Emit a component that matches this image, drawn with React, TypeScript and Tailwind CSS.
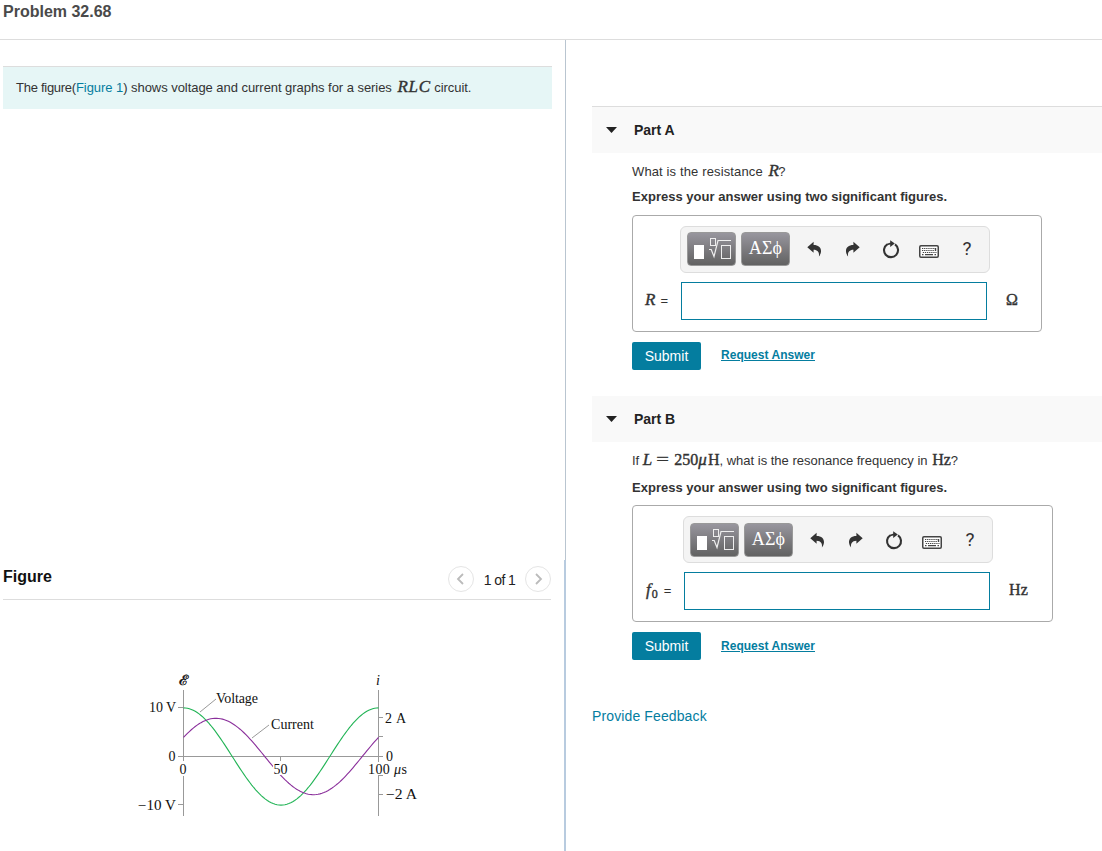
import React from 'react';

const CHART = { left: 183.5, right: 378.5, zero: 756.5 };

/**
 * Samples a cosine over one period and returns the SVG path for it
 */
function wavePath(amplitude: number, phase: number) {
  const points: string[] = [];
  for (let i = 0; i <= 100; i += 1) {
    const x = CHART.left + ((CHART.right - CHART.left) * i) / 100;
    const y = CHART.zero - amplitude * Math.cos((2 * Math.PI * i) / 100 - phase);
    points.push(`${x.toFixed(2)} ${y.toFixed(2)}`);
  }
  return `M${points.join('L')}`;
}

// Thin stroke gives the serif glyphs the weight of typeset math
function MathText({ children, className = '' }: { children: React.ReactNode; className?: string }) {
  return (
    <span
      className={`font-['Liberation_Serif',serif] leading-none [-webkit-text-stroke:0.4px_#333] ${className}`}
    >
      {children}
    </span>
  );
}

function UndoIcon({ flip = false }: { flip?: boolean }) {
  return (
    <svg width="15" height="16" viewBox="0 0 15 16" className={flip ? '-scale-x-100' : ''}>
      <path
        d="M0.3 6.2 6.6 0.8V4C11.5 4 14.3 6.7 14 10.6 13.8 12.9 12.8 14.6 11.9 15.4 12.5 11.6 11 8.8 6.6 8.7V11.8Z"
        fill="#333"
      />
    </svg>
  );
}

function ResetIcon() {
  return (
    <svg width="18" height="19" viewBox="0 0 18 19">
      <path d="M5.2 4.3A7 7 0 1 0 13 4.4" fill="none" stroke="#333" strokeWidth="2.1" />
      <path d="M8.2 0.2 12.8 3.6 8.2 7Z" fill="#333" />
      <path d="M5 4.5 9 3.4" stroke="#333" strokeWidth="1.8" />
    </svg>
  );
}

function KeyboardIcon() {
  return (
    <svg width="20" height="13" viewBox="0 0 20 13">
      <rect x="0.75" y="0.75" width="18.5" height="11.5" rx="1.2" fill="#fff" stroke="#444" strokeWidth="1.5" />
      <path d="M3 3.5H17.5M3 5.5H15" stroke="#444" strokeWidth="1.2" strokeDasharray="1.3 0.8" />
      <path d="M3.8 7.5H17.5" stroke="#444" strokeWidth="1.2" strokeDasharray="1.3 0.8" />
      <path d="M16.5 3V6M3 9.6H4.5M6 9.6H14M15.5 9.6H17" stroke="#444" strokeWidth="1.4" />
    </svg>
  );
}

function TemplatesIcon() {
  return (
    <svg width="38" height="24" viewBox="0 0 38 24">
      <rect x="0" y="8" width="10" height="14" fill="#fff" />
      <rect x="16.5" y="1.5" width="5" height="7" fill="none" stroke="#eee" />
      <path d="M15 12.5H17.2L20 19.5 24 3.5H37" fill="none" stroke="#eee" strokeWidth="1.2" />
      <rect x="27.5" y="8.5" width="9" height="13" fill="none" stroke="#eee" />
    </svg>
  );
}

function Toolbar({ className = '' }: { className?: string }) {
  return (
    <div
      className={`flex h-[47px] w-[310px] items-start rounded-md border border-[#ddd] bg-[#f4f4f4] pl-1.5 ${className}`}
    >
      <div className="mr-[5px] flex h-[34px] w-[49px] items-center justify-center rounded border border-[#999] bg-linear-to-b from-[#98969e] to-[#626262] pl-0.5">
        <TemplatesIcon />
      </div>
      <div className="mr-[5px] flex h-[34px] w-[49px] items-center justify-center rounded border border-[#999] bg-linear-to-b from-[#98969e] to-[#626262] pb-px font-['Liberation_Serif',serif] text-[18px] tracking-[0.2px] text-white">
        ΑΣϕ
      </div>
      <div className="flex h-[34px] w-[38px] items-center justify-center"><UndoIcon /></div>
      <div className="flex h-[34px] w-[38px] items-center justify-center"><UndoIcon flip /></div>
      <div className="flex h-[34px] w-[38px] items-center justify-center pl-0.5"><ResetIcon /></div>
      <div className="flex h-[34px] w-[38px] items-center justify-center pt-1 pl-0.5"><KeyboardIcon /></div>
      <div className="flex h-[34px] w-[38px] items-center justify-center pl-0.5 font-['Roboto',sans-serif] text-[19px] text-[#333]">
        ?
      </div>
    </div>
  );
}

function PartHeader({ title, className }: { title: string; className: string }) {
  return (
    <div className={`flex items-center bg-[#f9f9f9] ${className}`}>
      <svg width="11" height="6" viewBox="0 0 11 6" className="ml-3.5">
        <path d="M0 0H11L5.5 6Z" fill="#222" />
      </svg>
      <h2 className="ml-[17px] text-[14px] font-bold text-[#222]">{title}</h2>
    </div>
  );
}

function Actions({ linkClass = '' }: { linkClass?: string }) {
  return (
    <div className="mt-2.5 flex h-7 items-center">
      <button className="h-7 w-[69px] rounded-[2px] bg-[#047d9f] text-[14px] text-white">
        Submit
      </button>
      <a className={`ml-5 text-[12px] leading-4 font-bold tracking-[0.03px] text-[#047d9f] underline ${linkClass}`}>
        Request Answer
      </a>
    </div>
  );
}

function FigureChart() {
  return (
    <svg
      width="300"
      height="150"
      viewBox="130 670 300 150"
      className="mt-[70px] ml-[127px] font-['Liberation_Serif',serif] text-[14px]"
    >
      <g fill="none" stroke="#999" strokeWidth="1">
        <path d="M183.5 690V761M183.5 776V816M378.5 690V762M378.5 775V816" />
        <path d="M178 756.5H383M178 707.5H183M178 804.5H183M280.5 756V761" />
        <path d="M379 717.5H383M379 736.5H383M379 775.5H383M379 794.5H383" />
        <path d="M200 712 216 699M252 738 269 725" />
      </g>
      <g fill="none" strokeWidth="1.1">
        <path d={wavePath(48.6, 0)} stroke="#22b456" />
        <path d={wavePath(38.2, Math.PI / 3)} stroke="#8a2f9b" />
      </g>
      <rect x="273" y="764" width="16" height="11" fill="#fff" />
      <g fill="#111">
        <text x="179" y="685" textLength="9" lengthAdjust="spacingAndGlyphs" stroke="#111" strokeWidth="0.4" className="text-[14px]">ℰ</text>
        <text x="376" y="685" className="italic">i</text>
        <text x="149" y="712" textLength="27">10 V</text>
        <text x="168.5" y="761">0</text>
        <text x="179.5" y="774">0</text>
        <text x="138" y="810" textLength="38" lengthAdjust="spacingAndGlyphs">−10 V</text>
        <text x="216" y="703" textLength="42">Voltage</text>
        <text x="271" y="728.5" textLength="43">Current</text>
        <text x="273.5" y="774">50</text>
        <text x="385" y="723" textLength="21">2 A</text>
        <text x="386" y="761">0</text>
        <text x="368" y="774" textLength="39">
          100 <tspan className="italic">μ</tspan>s
        </text>
        <text x="386" y="799" textLength="31" lengthAdjust="spacingAndGlyphs">−2 A</text>
      </g>
    </svg>
  );
}

export default function App() {
  return (
    <div className="flex h-[851px] w-[1102px] flex-col overflow-hidden bg-white font-['Liberation_Sans',sans-serif] text-[13px] text-[#333]">
      <header className="h-10 shrink-0 border-b border-[#ddd] pt-px pl-[3px]">
        <h1 className="text-[16px] leading-[22px] font-bold text-[#4a4a4a]">Problem 32.68</h1>
      </header>

      <div className="flex min-h-0 flex-1">
        <section className="flex w-[564px] shrink-0 flex-col pl-[3px]">
          <div className="mt-[26px] h-[43px] w-[549px] border-t border-[#ddd] bg-[#e6f6f6] pl-[13px] leading-[42px] tracking-[-0.05px] whitespace-nowrap">
            <span className="tracking-[-0.27px]">The figure(</span>
            <a className="text-[#047d9f]">Figure 1</a>) shows voltage and current graphs for a series{' '}
            <MathText className="ml-0.5 text-[17px] tracking-[0.7px] italic">RLC</MathText> circuit.
          </div>

          <div className="mt-[451px] flex h-10 w-[548px] items-start border-b border-[#ddd]">
            <h2 className="mt-1.5 text-[16px] leading-[22px] font-bold text-[#111]">Figure</h2>
            <div className="mt-1.5 ml-auto flex items-center text-[14px] leading-[26px]">
              <span className="flex size-[26px] items-center justify-center rounded-full border border-[#e5e5e5] pr-0.5">
                <svg width="8" height="12" viewBox="0 0 8 12" fill="none" stroke="#bbb" strokeWidth="1.8">
                  <path d="M7 1 2 6 7 11" />
                </svg>
              </span>
              <span className="h-[26px] w-[51px] pt-px text-center tracking-[-0.55px] text-[#222]">1 of 1</span>
              <span className="flex size-[26px] items-center justify-center rounded-full border border-[#e5e5e5] pl-0.5">
                <svg width="8" height="12" viewBox="0 0 8 12" fill="none" stroke="#bbb" strokeWidth="1.8">
                  <path d="M1 1 6 6 1 11" />
                </svg>
              </span>
            </div>
          </div>
          <FigureChart />
        </section>

        <div className="flex w-0.5 shrink-0 flex-col items-end">
          <div className="h-[520px] w-px bg-[#b9c5d0]" />
          <div className="w-0.5 flex-1 bg-[#b8cbdf]" />
        </div>

        <main className="ml-[26px] flex flex-1 flex-col">
          <PartHeader title="Part A" className="mt-[66px] h-[47px] border-t border-[#ddd]" />
          <div className="pl-10">
            <p className="mt-[9px] h-5 leading-5 tracking-[0.13px] whitespace-nowrap">
              What is the resistance <MathText className="ml-0.5 text-[17px] tracking-[-0.6px] italic">R</MathText>?
            </p>
            <p className="mt-[5px] h-5 leading-5 font-bold tracking-[0.02px] whitespace-nowrap">
              Express your answer using two significant figures.
            </p>
            <div className="mt-2 h-[117px] w-[410px] rounded border border-[#aaa] pt-2.5">
              <Toolbar className="ml-[47px] pt-[5px]" />
              <div className="mt-[9px] flex items-center">
                <label className="mb-1 flex w-12 items-baseline pl-3 leading-none">
                  <MathText className="text-[17px] italic">R</MathText>
                  <span className="ml-[5px]">=</span>
                </label>
                <input className="h-[38px] w-[306px] border border-[#047d9f] bg-white outline-none" />
                <MathText className="mb-0.5 ml-[19px] text-[16px]">Ω</MathText>
              </div>
            </div>
            <Actions linkClass="mb-0.5" />
          </div>

          <PartHeader title="Part B" className="mt-[26px] h-[46px]" />
          <div className="pl-10">
            <p className="mt-[9px] h-5 leading-5 whitespace-nowrap">
              If <MathText className="text-[17px] italic">L</MathText>
              <MathText className="mr-[7px] ml-[6px] inline-block scale-x-140 text-[16px]">=</MathText>
              <MathText className="text-[16px]">250</MathText>
              <MathText className="text-[17px] italic">μ</MathText>
              <MathText className="ml-px text-[16px]">H</MathText>, what is the resonance frequency in{' '}
              <MathText className="ml-px text-[16px]">Hz</MathText>?
            </p>
            <p className="mt-[7px] h-5 leading-5 font-bold tracking-[0.02px] whitespace-nowrap">
              Express your answer using two significant figures.
            </p>
            <div className="mt-[7px] h-[117px] w-[421px] rounded border border-[#aaa] pt-2.5">
              <Toolbar className="ml-[50px] pt-1.5" />
              <div className="mt-[9px] flex items-center">
                <label className="mb-1 flex w-[51px] items-baseline pl-[13px] leading-none">
                  <MathText className="text-[17px] italic">f</MathText>
                  <MathText className="relative top-[3px] ml-px text-[12px]">0</MathText>
                  <span className="ml-1.5">=</span>
                </label>
                <input className="h-[38px] w-[306px] border border-[#047d9f] bg-white outline-none" />
                <MathText className="mb-0.5 ml-[19px] text-[16px] tracking-[0.3px]">Hz</MathText>
              </div>
            </div>
            <Actions />
          </div>

          <a className="mt-[46px] text-[14px] leading-5 tracking-[0.12px] text-[#047d9f]">Provide Feedback</a>
        </main>
      </div>
    </div>
  );
}
